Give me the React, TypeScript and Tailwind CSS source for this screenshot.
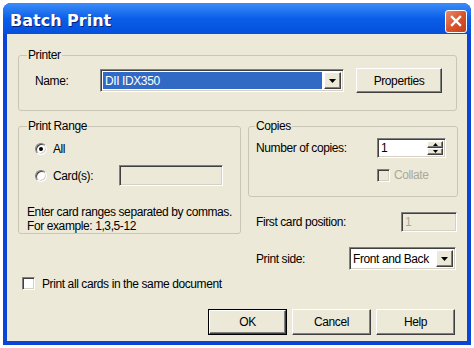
import React from 'react';

const sunken =
  'border-t border-l border-b border-r border-t-[#808080] border-l-[#808080] border-b-white border-r-white shadow-[inset_1px_1px_0_#404040,inset_-1px_-1px_0_#d4d0c8]';
const raised =
  'border border-t-white border-l-white border-b-[#404040] border-r-[#404040] shadow-[inset_-1px_-1px_0_#808080] bg-[#ece9d8]';

const Arrow: React.FC<{ up?: boolean; small?: boolean }> = ({ up, small }) => (
  <svg width={small ? 5 : 7} height={small ? 3 : 4} viewBox="0 0 7 4" className="block">
    <polygon points={up ? '0,4 7,4 3.5,0' : '0,0 7,0 3.5,4'} fill="#000" />
  </svg>
);

const DropButton: React.FC = () => (
  <div className={`w-[17px] h-full flex items-center justify-center ${raised}`}>
    <Arrow />
  </div>
);

const Radio: React.FC<{ checked?: boolean }> = ({ checked }) => (
  <div className="w-[12px] h-[12px] rounded-full bg-white border border-t-[#808080] border-l-[#808080] border-b-white border-r-white shadow-[inset_1px_1px_0_#404040,inset_-1px_-1px_0_#d4d0c8] flex items-center justify-center">
    {checked && <div className="w-[4px] h-[4px] rounded-full bg-black" />}
  </div>
);

const Check: React.FC<{ disabled?: boolean }> = ({ disabled }) => (
  <div className={`w-[13px] h-[13px] ${disabled ? 'bg-[#ece9d8]' : 'bg-white'} ${sunken}`} />
);

const Button: React.FC<{ label: string; primary?: boolean; className?: string }> = ({ label, primary, className }) => (
  <div
    className={`flex items-center justify-center ${
      primary ? 'border border-black' : ''
    } ${className ?? ''}`}
  >
    <div className={`w-full h-full flex items-center justify-center ${raised}`}>{label}</div>
  </div>
);

export default function App() {
  return (
    <div className="w-[474px] h-[348px] bg-white pt-[3px] pl-[3px] font-['Liberation_Sans',Arial,sans-serif] text-[12px] tracking-[-0.4px] text-black">
      <div className="w-[468px] h-[342px] rounded-t-[8px] bg-[#0a45d6] flex flex-col overflow-hidden">
        {/* title bar */}
        <div className="h-[31px] shrink-0 bg-linear-to-b from-[#3b8cf8] via-[#0a5ee9] to-[#0450dc] flex items-center justify-between pl-[7px] pr-[4px] pt-[5px]">
          <span className="font-['DejaVu_Sans',sans-serif] font-bold text-[16px] tracking-normal text-white [text-shadow:1px_1px_0_#0a1f7a]">
            Batch Print
          </span>
          <div className="w-[22px] h-[23px] rounded-[3px] border border-white bg-linear-to-br from-[#e88a6a] via-[#d9542c] to-[#c2401d] flex items-center justify-center">
            <svg width="12" height="12" viewBox="0 0 12 12">
              <path d="M2 2 L10 10 M10 2 L2 10" stroke="#fff" strokeWidth="2.4" strokeLinecap="square" />
            </svg>
          </div>
        </div>

        {/* body */}
        <div className="flex-1 mx-[4px] mb-[4px] bg-[#ece9d8] pl-[11px] pt-[14px]">
          {/* Printer */}
          <fieldset className="w-[439px] h-[63px] border border-[#c9c6b6] rounded-[3px] pl-[16px] pr-[14px]">
            <legend className="-ml-[8px] px-[1px] leading-[14px]">Printer</legend>
            <div className="flex items-center mt-[6px] h-[25px]">
              <span className="w-[65px]">Name:</span>
              <div className={`w-[244px] h-[23px] bg-white flex items-center pl-[2px] pr-[2px] py-[2px] ${sunken}`}>
                <div className="flex-1 h-full bg-[#316ac5] text-white flex items-center pl-[2px]">DII IDX350</div>
                <div className="h-full ml-[2px]">
                  <DropButton />
                </div>
              </div>
              <Button label="Properties" className="ml-[12px] w-[86px] h-[25px]" />
            </div>
          </fieldset>

          <div className="flex mt-[8px] h-[151px]">
            {/* Print Range */}
            <fieldset className="w-[223px] h-[115px] border border-[#c9c6b6] rounded-[3px] pl-[8px]">
              <legend className="px-[1px] leading-[14px]">Print Range</legend>
              <div className="ml-[8px] mt-[6px] h-[20px] flex items-center">
                <Radio checked />
                <span className="ml-[6px]">All</span>
              </div>
              <div className="ml-[8px] mt-[6px] h-[21px] flex items-center">
                <Radio />
                <span className="ml-[6px] w-[66px]">Card(s):</span>
                <div className={`w-[104px] h-[21px] bg-[#ece9d8] ${sunken}`} />
              </div>
              <div className="mt-[19px] leading-[14px] whitespace-nowrap">
                <div>Enter card ranges separated by commas.</div>
                <div>For example: 1,3,5-12</div>
              </div>
            </fieldset>

            {/* right column */}
            <div className="ml-[7px] w-[210px] flex flex-col">
              <fieldset className="w-[210px] h-[78px] border border-[#c9c6b6] rounded-[3px] pl-[7px]">
                <legend className="-ml-[1px] px-[1px] leading-[14px]">Copies</legend>
                <div className="mt-[5px] h-[20px] flex items-center">
                  <span className="w-[121px]">Number of copies:</span>
                  <div className={`w-[69px] h-[20px] bg-white flex items-center ${sunken} pl-[3px] pr-[2px] py-[2px]`}>
                    <span className="flex-1">1</span>
                    <div className="w-[16px] h-full flex flex-col">
                      <div className={`flex-1 flex items-center justify-center ${raised}`}>
                        <Arrow up small />
                      </div>
                      <div className={`flex-1 flex items-center justify-center ${raised}`}>
                        <Arrow small />
                      </div>
                    </div>
                  </div>
                </div>
                <div className="mt-[10px] ml-[121px] h-[14px] flex items-center text-[#aca899]">
                  <Check disabled />
                  <span className="ml-[4px]">Collate</span>
                </div>
              </fieldset>

              <div className="mt-[15px] h-[20px] flex items-center pl-[8px]">
                <span className="w-[145px]">First card position:</span>
                <div className={`w-[56px] h-[20px] bg-[#ece9d8] text-[#aca899] flex items-center pl-[3px] ${sunken}`}>1</div>
              </div>

              <div className="mt-[15px] h-[23px] flex items-center pl-[8px]">
                <span className="w-[93px]">Print side:</span>
                <div className={`w-[107px] h-[23px] bg-white flex items-center pl-[3px] pr-[2px] py-[2px] ${sunken}`}>
                  <span className="flex-1">Front and Back</span>
                  <div className="h-full">
                    <DropButton />
                  </div>
                </div>
              </div>
            </div>
          </div>

          <div className="mt-[7px] ml-[4px] h-[13px] flex items-center">
            <Check />
            <span className="ml-[7px]">Print all cards in the same document</span>
          </div>

          <div className="mt-[19px] flex gap-[5px] ml-[190px] h-[26px]">
            <Button label="OK" primary className="w-[79px] h-[26px]" />
            <Button label="Cancel" className="w-[79px] h-[26px]" />
            <Button label="Help" className="w-[79px] h-[26px]" />
          </div>
        </div>
      </div>
    </div>
  );
}
